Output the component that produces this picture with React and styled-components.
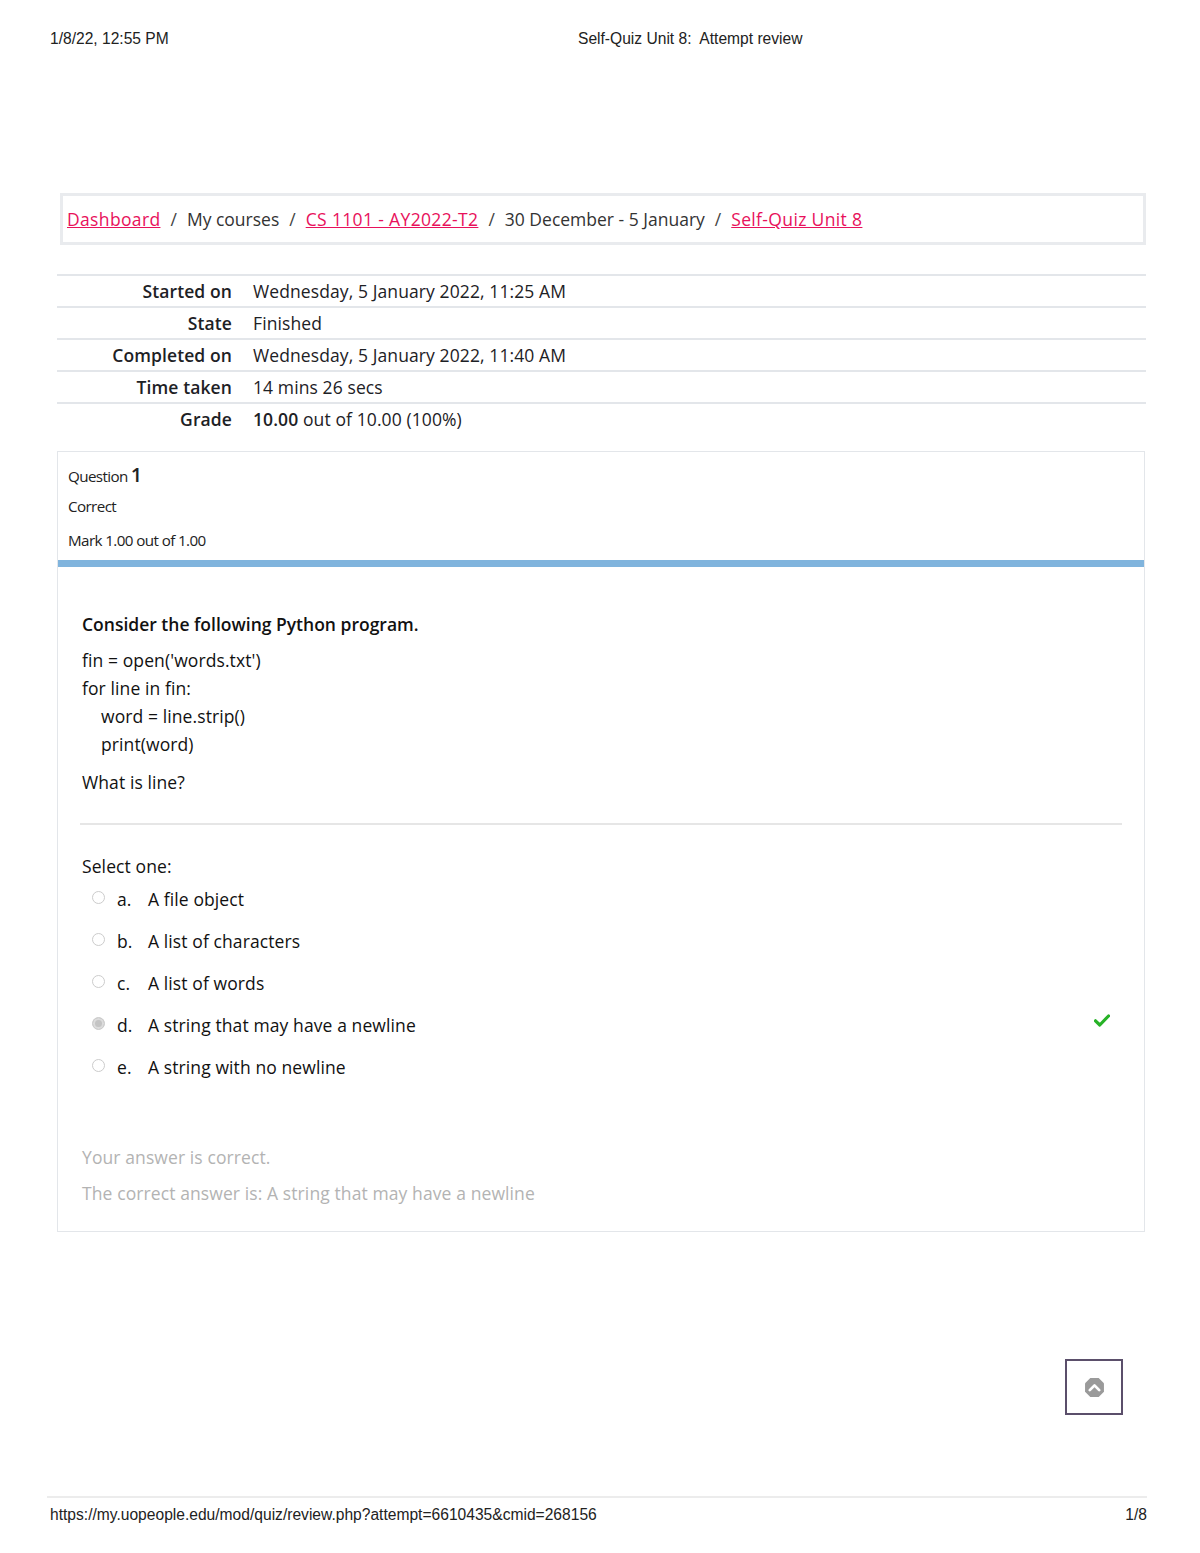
import React from 'react'
import styled, { createGlobalStyle } from 'styled-components'

const Global = createGlobalStyle`
  body {
    margin: 0;
    background: #fff;
    font-family: "Open Sans", "Noto Sans", sans-serif;
    color: #1d2125;
  }
`;

const Page = styled.div`
  width: 1200px;
  min-height: 1553px;
  position: relative;
`;

const PrintHeader = styled.div`
  display: flex;
  padding: 31px 0 0 50px;
  height: 16px;
  font-family: "Liberation Sans", Arial, sans-serif;
  font-size: 15.6px;
  line-height: 16px;
  color: #222;
`;

const HeaderDate = styled.div`
  width: 528px;
`;

const Breadcrumb = styled.nav`
  margin: 146px 0 0 60px;
  width: 1076px;
  height: 46px;
  border: 3px solid #e9ebee;
  display: flex;
  align-items: center;
  padding-left: 4px;
  font-size: 17.5px;
  color: #333;
`;

const Crumb = styled.a`
  color: #e8115b;
  text-decoration: underline;
  letter-spacing: 0.35px;
`;

const Sep = styled.span`
  margin: 0 10px;
  color: #444;
`;

const Summary = styled.div`
  margin: 29px 0 0 57px;
  width: 1089px;
`;

const SummaryRow = styled.div`
  display: flex;
  height: 30px;
  align-items: center;
  border-top: 2px solid #e3e6ea;
  font-size: 17.5px;
  letter-spacing: 0.1px;
`;

const Label = styled.div`
  width: 175px;
  text-align: right;
  font-weight: 600;
  padding-right: 8px;
`;

const Value = styled.div`
  padding-left: 13px;
  b { font-weight: 600; }
`;

const Card = styled.div`
  margin: 17px 0 0 57px;
  width: 1086px;
  border: 1px solid #e3e6ea;
`;

const Info = styled.div`
  padding: 12px 10px 11px;
  font-size: 15.2px;
  letter-spacing: -0.6px;
  color: #222;
`;

const QNo = styled.div`
  display: flex;
  align-items: baseline;
  height: 22px;
  line-height: 22px;
  b {
    font-size: 20px;
    font-weight: 600;
    margin-left: 3px;
  }
`;

const InfoLine = styled.div`
  height: 18px;
  line-height: 18px;
  margin-top: ${p => p.$gap}px;
`;

const Formulation = styled.div`
  border-top: 7px solid #80b4dd;
  padding: 45px 22px 37px 24px;
  font-size: 17.5px;
  letter-spacing: 0.1px;
  color: #111;
`;

const Para = styled.p`
  margin: 0 0 ${p => p.$mb || 0}px;
  line-height: 24px;
  b {
    font-weight: 600;
    letter-spacing: 0;
  }
`;

const CodeLine = styled.div`
  line-height: 28px;
  padding-left: ${p => (p.$indent ? 19 : 0)}px;
`;

const Rule = styled.hr`
  border: none;
  border-top: 2px solid #e6e6e6;
  margin: 29px 0 29px -2px;
`;

const Option = styled.div`
  display: flex;
  align-items: center;
  height: 42px;
  padding-left: 10px;
`;

const Radio = styled.span`
  width: 11px;
  height: 11px;
  border-radius: 50%;
  border: 1px solid #cccccc;
  background: ${p => (p.$checked ? '#c4c4c4' : '#fff')};
  box-shadow: ${p => (p.$checked ? 'inset 0 0 0 2px #dcdcdc' : 'none')};
  margin-top: -4px;
`;

const Letter = styled.span`
  width: 31px;
  margin-left: 12px;
`;

const Check = styled.span`
  margin-left: auto;
  margin-right: 12px;
  margin-top: -10px;
  display: flex;
`;

const Feedback = styled.div`
  padding: 20px 24px 26px;
  font-size: 17.5px;
  letter-spacing: 0.1px;
  color: #b3b3b3;
`;

const BackTop = styled.button`
  display: flex;
  align-items: center;
  justify-content: center;
  margin: 127px 0 0 1065px;
  width: 58px;
  height: 56px;
  border: 2px solid #5b4f6b;
  background: #fff;
  padding: 0;
`;

const Footer = styled.div`
  position: absolute;
  left: 0;
  right: 0;
  top: 1496px;
`;

const FooterRule = styled.div`
  margin-left: 47px;
  width: 1100px;
  border-top: 2px solid #ececec;
`;

const FooterRow = styled.div`
  display: flex;
  justify-content: space-between;
  margin: 9px 53px 0 50px;
  font-family: "Liberation Sans", Arial, sans-serif;
  font-size: 15.6px;
  line-height: 16px;
  color: #222;
`;

const options = [
  ['a.', 'A file object'],
  ['b.', 'A list of characters'],
  ['c.', 'A list of words'],
  ['d.', 'A string that may have a newline', true],
  ['e.', 'A string with no newline'],
];

const summary = [
  ['Started on', 'Wednesday, 5 January 2022, 11:25 AM'],
  ['State', 'Finished'],
  ['Completed on', 'Wednesday, 5 January 2022, 11:40 AM'],
  ['Time taken', '14 mins 26 secs'],
];

export default function App() {
  return (
    <Page>
      <Global />
      <PrintHeader>
        <HeaderDate>1/8/22, 12:55 PM</HeaderDate>
        <div>Self-Quiz Unit 8:&nbsp; Attempt review</div>
      </PrintHeader>

      <Breadcrumb>
        <Crumb>Dashboard</Crumb>
        <Sep>/</Sep>
        <span>My courses</span>
        <Sep>/</Sep>
        <Crumb>CS 1101 - AY2022-T2</Crumb>
        <Sep>/</Sep>
        <span>30 December - 5 January</span>
        <Sep>/</Sep>
        <Crumb>Self-Quiz Unit 8</Crumb>
      </Breadcrumb>

      <Summary>
        {summary.map(([k, v]) => (
          <SummaryRow key={k}>
            <Label>{k}</Label>
            <Value>{v}</Value>
          </SummaryRow>
        ))}
        <SummaryRow>
          <Label>Grade</Label>
          <Value><b>10.00</b> out of 10.00 (100%)</Value>
        </SummaryRow>
      </Summary>

      <Card>
        <Info>
          <QNo>Question<b>1</b></QNo>
          <InfoLine $gap={11}>Correct</InfoLine>
          <InfoLine $gap={16}>Mark 1.00 out of 1.00</InfoLine>
        </Info>
        <Formulation>
          <Para $mb={10}><b>Consider the following Python program.</b></Para>
          <CodeLine>fin = open('words.txt')</CodeLine>
          <CodeLine>for line in fin:</CodeLine>
          <CodeLine $indent>word = line.strip()</CodeLine>
          <CodeLine $indent>print(word)</CodeLine>
          <Para style={{ marginTop: 12 }}>What is line?</Para>
          <Rule />
          <Para>Select one:</Para>
          {options.map(([l, t, ok]) => (
            <Option key={l}>
              <Radio $checked={ok} />
              <Letter>{l}</Letter>
              <span>{t}</span>
              {ok && (
                <Check>
                  <svg width="16" height="13" viewBox="0 0 16 13">
                    <path d="M1.5 6.8 L5.8 11 L14.5 2" fill="none" stroke="#27b227" strokeWidth="3.2" strokeLinecap="round" strokeLinejoin="round" />
                  </svg>
                </Check>
              )}
            </Option>
          ))}
        </Formulation>
        <Feedback>
          <Para $mb={12}>Your answer is correct.</Para>
          <Para>The correct answer is: A string that may have a newline</Para>
        </Feedback>
      </Card>

      <BackTop aria-label="Back to top">
        <svg width="21" height="21" viewBox="0 0 20 20">
          <path d="M6 1 H14 L19 6 V14 L14 19 H6 L1 14 V6 Z" fill="#9a9a9a" />
          <path d="M5.5 12.5 L10 8 L14.5 12.5" fill="none" stroke="#fff" strokeWidth="2.6" strokeLinecap="round" strokeLinejoin="round" />
        </svg>
      </BackTop>

      <Footer>
        <FooterRule />
        <FooterRow>
          <span>https://my.uopeople.edu/mod/quiz/review.php?attempt=6610435&amp;cmid=268156</span>
          <span>1/8</span>
        </FooterRow>
      </Footer>
    </Page>
  );
}
